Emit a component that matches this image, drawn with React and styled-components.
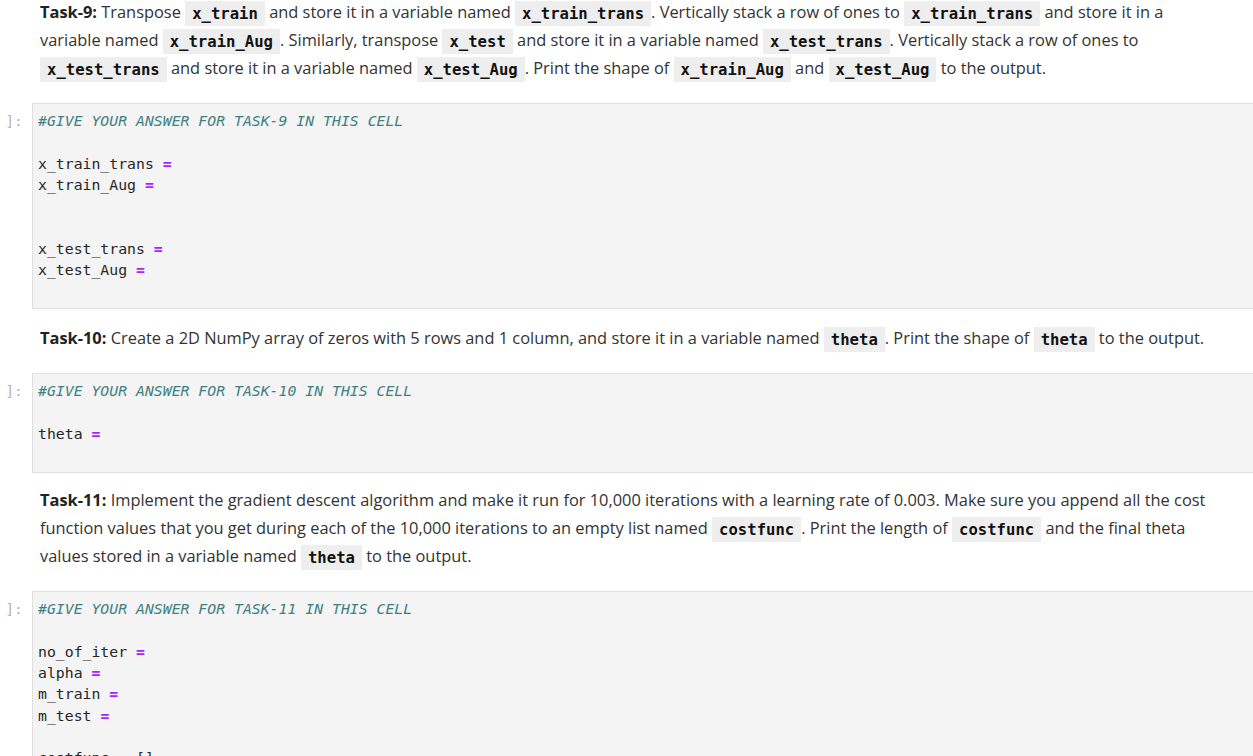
import React from "react";
import styled, { createGlobalStyle } from "styled-components";

const Global = createGlobalStyle`
  html, body { margin: 0; padding: 0; background: #fff; overflow: hidden; }
  body { font-family: "Open Sans", "Noto Sans", sans-serif; }
`;

const Notebook = styled.div`
  width: 1300px;
  margin-top: -2px;
  display: flex;
  flex-direction: column;
`;

const Row = styled.div`
  display: flex;
  align-items: flex-start;
  margin-bottom: ${(p) => p.$gap}px;
`;

const Prompt = styled.div`
  flex: none;
  width: 32px;
  box-sizing: border-box;
  padding: 7px 9px 0 0;
  text-align: right;
  font-family: "DejaVu Sans Mono", monospace;
  font-size: 14.8px;
  line-height: 21.25px;
  color: #b5b5b5;
  white-space: nowrap;
`;

const InputArea = styled.div`
  flex: 1;
  min-width: 0;
  background: #f4f4f4;
  border: 1px solid #e0e0e0;
  padding: 6px 5px 7px;
`;

const Code = styled.pre`
  margin: 0;
  font-family: "DejaVu Sans Mono", monospace;
  font-size: 14.8px;
  line-height: 21.25px;
  color: #262626;
  white-space: pre;
`;

const Comment = styled.span`
  color: #408080;
  font-style: italic;
`;

const Op = styled.span`
  color: #aa22ff;
  font-weight: bold;
`;

const Markdown = styled.div`
  flex: 1;
  padding-left: 8px;
  font-size: 16.4px;
  line-height: 28px;
  color: #333;
  white-space: nowrap;
`;

const Strong = styled.strong`
  font-weight: 700;
  color: #222;
`;

const InlineCode = styled.code`
  font-family: "DejaVu Sans Mono", monospace;
  font-weight: bold;
  font-size: 15.6px;
  line-height: 1;
  color: #111;
  background: #eeeeee;
  padding: 3.5px 7px;
`;

const C = ({ children }) => <InlineCode>{children}</InlineCode>;

const Assign = ({ name, rest = "" }) => (
  <>
    {name} <Op>=</Op>
    {rest}
  </>
);

const CodeCell = ({ task, children, gap }) => (
  <Row $gap={gap}>
    <Prompt>]:</Prompt>
    <InputArea>
      <Code>
        <Comment>#GIVE YOUR ANSWER FOR TASK-{task} IN THIS CELL</Comment>
        {"\n"}
        {children}
      </Code>
    </InputArea>
  </Row>
);

export default function App() {
  return (
    <>
      <Global />
      <Notebook>
        <Row $gap={21}>
          <Prompt />
          <Markdown>
            <Strong>Task-9:</Strong> Transpose <C>x_train</C> and store it in a variable named{" "}
            <C>x_train_trans</C>. Vertically stack a row of ones to <C>x_train_trans</C> and store it in a
            <br />
            variable named <C>x_train_Aug</C>. Similarly, transpose <C>x_test</C> and store it in a variable
            named <C>x_test_trans</C>. Vertically stack a row of ones to
            <br />
            <C>x_test_trans</C> and store it in a variable named <C>x_test_Aug</C>. Print the shape of{" "}
            <C>x_train_Aug</C> and <C>x_test_Aug</C> to the output.
          </Markdown>
        </Row>

        <CodeCell task="9" gap={15}>
          {"\n"}
          <Assign name="x_train_trans" />
          {"\n"}
          <Assign name="x_train_Aug" />
          {"\n\n\n"}
          <Assign name="x_test_trans" />
          {"\n"}
          <Assign name="x_test_Aug" />
          {"\n "}
        </CodeCell>

        <Row $gap={21}>
          <Prompt />
          <Markdown>
            <Strong>Task-10:</Strong> Create a 2D NumPy array of zeros with 5 rows and 1 column, and store it
            in a variable named <C>theta</C>. Print the shape of <C>theta</C> to the output.
          </Markdown>
        </Row>

        <CodeCell task="10" gap={13}>
          {"\n"}
          <Assign name="theta" />
          {"\n "}
        </CodeCell>

        <Row $gap={21}>
          <Prompt />
          <Markdown>
            <Strong>Task-11:</Strong> Implement the gradient descent algorithm and make it run for 10,000
            iterations with a learning rate of 0.003. Make sure you append all the cost
            <br />
            function values that you get during each of the 10,000 iterations to an empty list named{" "}
            <C>costfunc</C>. Print the length of <C>costfunc</C> and the final theta
            <br />
            values stored in a variable named <C>theta</C> to the output.
          </Markdown>
        </Row>

        <CodeCell task="11" gap={14}>
          {"\n"}
          <Assign name="no_of_iter" />
          {"\n"}
          <Assign name="alpha" />
          {"\n"}
          <Assign name="m_train" />
          {"\n"}
          <Assign name="m_test" />
          {"\n\n"}
          <Assign name="costfunc" rest=" []" />
          {"\n\n"}
          {"for i in range(no_of_iter):\n    \n"}
        </CodeCell>
      </Notebook>
    </>
  );
}
